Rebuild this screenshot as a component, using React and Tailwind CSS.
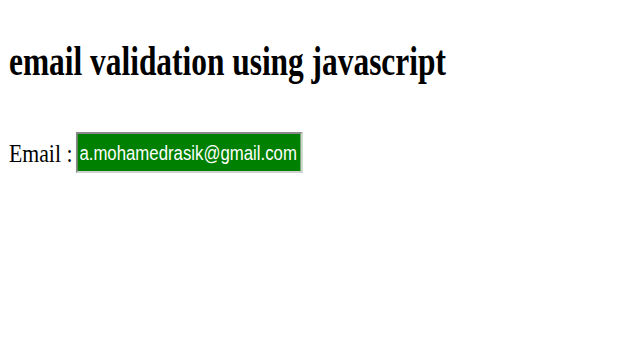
import React from 'react';

const App = () => {
  return (
    <div className="w-[620px] h-[350px] bg-white overflow-hidden pl-[9px] font-['Liberation_Serif',serif] text-black">
      {/* Title */}
      <h1 className="mt-[39px] inline-block whitespace-nowrap text-[43px] leading-none font-bold origin-left scale-x-[0.73]">
        email validation using javascript
      </h1>

      {/* Email row */}
      <div className="mt-[50px] flex items-center h-[41px] origin-left scale-x-[0.87] whitespace-nowrap">
        <span className="text-[25px] leading-[25px] pt-[2px]">Email :</span>
        <input
          type="text"
          readOnly
          defaultValue="a.mohamedrasik@gmail.com"
          className="ml-[4px] w-[260px] h-[41px] border-2 border-t-[#8a8a8a] border-l-[#8a8a8a] border-r-[#d0d0d0] border-b-[#d0d0d0] bg-[#008000] text-white pl-[2px] pr-0 pt-[2px] text-[19.3px] font-['Liberation_Sans',Arial,sans-serif] outline-none"
        />
      </div>
    </div>
  );
};

export default App;
